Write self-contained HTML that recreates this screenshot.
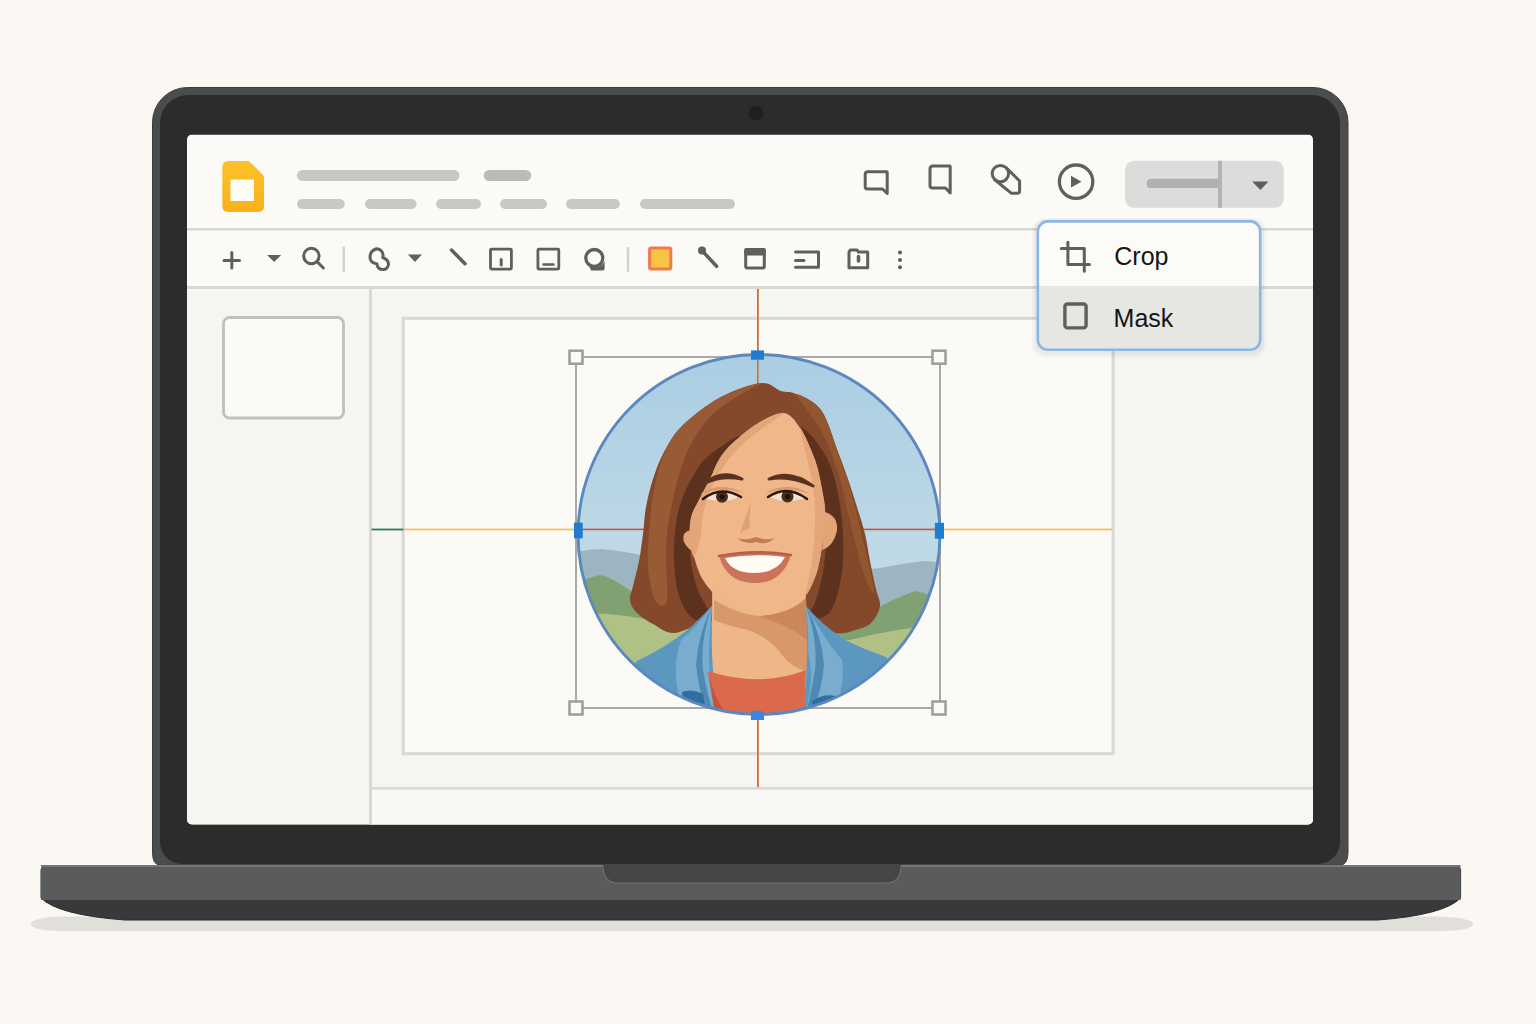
<!DOCTYPE html>
<html>
<head>
<meta charset="utf-8">
<style>
html,body{margin:0;padding:0;background:#FAF8F4;}
body{width:1536px;height:1024px;overflow:hidden;position:relative;font-family:"Liberation Sans",sans-serif;}
svg{position:absolute;left:0;top:0;}
</style>
</head>
<body>
<svg width="1536" height="1024" viewBox="0 0 1536 1024">
<defs>
  <clipPath id="screenClip"><rect x="187" y="134.5" width="1126" height="690" rx="5"/></clipPath>
  <clipPath id="circClip"><ellipse cx="759" cy="534.5" rx="181" ry="180"/></clipPath>
  <linearGradient id="sky" x1="0" y1="0" x2="0" y2="1">
    <stop offset="0" stop-color="#AACDE3"/>
    <stop offset="0.5" stop-color="#BDD8E6"/>
    <stop offset="1" stop-color="#CCDFE6"/>
  </linearGradient>
  <linearGradient id="logoG" x1="0" y1="0" x2="0" y2="1">
    <stop offset="0" stop-color="#FDC22B"/>
    <stop offset="1" stop-color="#F8B01B"/>
  </linearGradient>
</defs>
<!-- background -->
<rect x="0" y="0" width="1536" height="1024" fill="#FBF8F3"/>

<!-- shadow under base -->
<path d="M60 916.5 L1440 916.5 Q1473 918 1473 924 Q1473 930.5 1440 931 L60 931 Q31 930.5 31 924 Q31 918 60 916.5 Z" fill="#E1DFDA"/>

<!-- LAPTOP LID -->
<path d="M152.5 122.5 A35 35 0 0 1 187.5 87.5 L1313 87.5 A35 35 0 0 1 1348 122.5 L1348 852 Q1348 865 1340 865 L160 865 Q152.5 865 152.5 852 Z" fill="#4B4C4C" stroke="#3C3D3D" stroke-width="1"/>
<path d="M160 123 A28 28 0 0 1 188 95 L1312 95 A28 28 0 0 1 1340 123 L1340 842 A22 22 0 0 1 1318 864 L182 864 A22 22 0 0 1 160 842 Z" fill="#2B2D2D"/>
<circle cx="756" cy="113.4" r="7.3" fill="#1E2020"/>

<!-- BASE -->
<path d="M41 870 Q41 867 44 867 L1457.6 867 Q1460.6 867 1460.6 870 L1460.6 898 Q1444 915 1378 920 L125 920 Q58 915 41 898 Z" fill="#38393A" stroke="#2A2B2C" stroke-width="1"/>
<path d="M41 870 Q41 867 44 867 L1457.6 867 Q1460.6 867 1460.6 870 L1460.6 900 L41 900 Z" fill="#5A5B5D"/>
<rect x="41" y="865" width="1419.6" height="2" fill="#767779"/>
<!-- notch -->
<path d="M603 864.5 L901 864.5 L901 868 Q901 883 886 883 L618 883 Q603 883 603 868 Z" fill="#454648"/>
<path d="M603 866 Q603 883 618 883 L886 883 Q901 883 901 866" fill="none" stroke="#6E6F71" stroke-width="1.2"/>

<!-- SCREEN -->
<g clip-path="url(#screenClip)">
  <rect x="187" y="134.5" width="1126" height="690" fill="#FBFAF7"/>
  <!-- sidebar/canvas backgrounds -->
  <rect x="187" y="288" width="1126" height="537" fill="#F6F5F1"/>
  <rect x="371.5" y="789" width="942" height="36" fill="#F8F7F3"/>
  <!-- header divider -->
  <rect x="187" y="228" width="1126" height="2.5" fill="#D9D7D3"/>
  <!-- toolbar divider -->
  <rect x="187" y="286" width="1126" height="3" fill="#D9D7D3"/>
  <!-- sidebar divider -->
  <rect x="369" y="288" width="3" height="537" fill="#DAD8D4"/>
  <!-- canvas bottom line -->
  <rect x="371" y="787" width="942" height="2.5" fill="#DAD8D4"/>
  <!-- thumbnail -->
  <rect x="223.5" y="317.5" width="120" height="100.5" rx="6" fill="#FBFAF7" stroke="#C0C0BF" stroke-width="2.8"/>
  <!-- slide -->
  <rect x="403.2" y="318.3" width="709.9" height="435.4" fill="#FBFAF7" stroke="#DAD8D4" stroke-width="3"/>

  <!-- HEADER -->
  <!-- logo -->
  <path d="M222.3 167 Q222.3 161 228.3 161 L247.5 161 Q249 161 250 162 L263 175 Q264 176 264 177.5 L264 206 Q264 212 258 212 L228.3 212 Q222.3 212 222.3 206 Z" fill="url(#logoG)"/>
  
  <rect x="230.5" y="179.5" width="23.5" height="21.5" fill="#FDFCF6"/>
  <!-- title bars -->
  <g fill="#C8C8C7">
    <rect x="297" y="170" width="162.5" height="11" rx="5.5"/>
    <rect x="483.8" y="170" width="47.4" height="11" rx="5.5" fill="#BABBBA"/>
    <rect x="297" y="199" width="47.7" height="10" rx="5"/>
    <rect x="365" y="199" width="51.6" height="10" rx="5"/>
    <rect x="436" y="199" width="45" height="10" rx="5"/>
    <rect x="500" y="199" width="47" height="10" rx="5"/>
    <rect x="566" y="199" width="53.8" height="10" rx="5"/>
    <rect x="640" y="199" width="95" height="10" rx="5"/>
  </g>
  <!-- right header icons -->
  <g fill="none" stroke="#5E5F5F" stroke-width="3" stroke-linejoin="round" stroke-linecap="round">
    <path d="M868 171.7 L886.7 171.7 Q887.2 171.7 887.2 172.2 L887.2 193.5 L882.5 189 L867.5 189 Q865.2 189 865.2 186.7 L865.2 174.5 Q865.2 171.7 868 171.7 Z"/>
    <path d="M933 166 L949.5 166 Q950.2 166 950.2 166.7 L950.2 193 L945.5 188 L932.5 188 Q930 188 930 185.5 L930 169 Q930 166 933 166 Z"/>
    <circle cx="1000.4" cy="173.6" r="8.2"/>
    <path d="M1006.5 168 L1019.6 181 L1019.6 191 Q1019.6 193.3 1017.3 193.3 L1011.5 193.3 L994.5 179.5"/>
    <circle cx="1076.1" cy="181.7" r="16.7" stroke-width="3.3"/>
  </g>
  <path d="M1071 175.7 L1081.5 181.7 L1071 187.6 Z" fill="#5E5F5F"/>
  <!-- button -->
  <rect x="1125" y="160.8" width="158.8" height="47" rx="9" fill="#DCDCDA"/>
  <rect x="1218" y="160.8" width="4" height="47" fill="#B3B3B3"/>
  <path d="M1151.5 178.7 L1218 178.7 L1218 188.1 L1151.5 188.1 Q1146.6 188.1 1146.6 183.4 Q1146.6 178.7 1151.5 178.7 Z" fill="#AEB0B2"/>
  <path d="M1252.2 181.6 L1268.5 181.6 L1260.35 189.9 Z" fill="#5F5F5F"/>

  <!-- TOOLBAR -->
  <g fill="none" stroke="#5E5F5F" stroke-width="3" stroke-linecap="round" stroke-linejoin="round">
    <!-- plus -->
    <path d="M224 260.4 L239.5 260.4 M231.8 252.6 L231.8 268"/>
    <!-- magnifier -->
    <circle cx="311.4" cy="256" r="7.7"/>
    <path d="M317 261.6 L323.4 268"/>
    <!-- link -->
    <path d="M371.5 252 Q376 246.5 381 250.5 Q384 253.5 382.7 257.5 Q388.5 259.5 388.5 264.5 Q387.5 270 382 269.5 Q377.5 269 377 264 Q370 262.5 370 257.5 Q370 254 371.5 252 Z"/>
    <!-- line -->
    <path d="M451.5 250 L465 263.7" stroke-width="3.5"/>
    <!-- box1 -->
    <rect x="490.5" y="249.2" width="20.9" height="19.9" rx="1" stroke-width="2.8"/>
    <path d="M501.2 259.5 L501.2 265"/>
    <!-- box2 -->
    <rect x="537.9" y="249.2" width="20.9" height="19.9" rx="1" stroke-width="2.8"/>
    <path d="M543.5 264.6 L553.4 264.6" stroke-width="2.5"/>
    <!-- circle bubble -->
    <circle cx="594.3" cy="258" r="8.5" stroke-width="3.3"/>
    <!-- pen -->
    <path d="M702 250.6 L716.6 266.3" stroke-width="3.5"/>
    <!-- window -->
    <rect x="745.7" y="249.5" width="18.6" height="18.4" rx="1.5"/>
    <!-- textbox -->
    <path d="M795.5 252 L818.5 252 L818.5 267.2 L795.5 267.2 M795.5 260.4 L804 260.4"/>
    <!-- folder box -->
    <path d="M849 252 L850.5 250 L857 250 L858.5 252 L867.7 252 L867.7 267.8 L849 267.8 Z"/>
    <path d="M858.5 256.5 L858.5 261" stroke-width="3.5"/>
  </g>
  <path d="M267.1 254.9 L281.1 254.9 L274.1 262.1 Z" fill="#5E5F5F"/>
  <path d="M407.9 254.6 L422 254.6 L414.95 261.9 Z" fill="#5E5F5F"/>
  <circle cx="702" cy="250.6" r="4" fill="#5E5F5F"/>
  <rect x="744.2" y="248" width="21.6" height="7.5" rx="2" fill="#5E5F5F"/>
  <circle cx="900" cy="252.4" r="2" fill="#5E5F5F"/>
  <circle cx="900" cy="260" r="2" fill="#5E5F5F"/>
  <circle cx="900" cy="267.3" r="2" fill="#5E5F5F"/>
  <path d="M589 265.5 L591 270.6 L602.5 270.6 Q604.6 270.6 604.6 268.5 L604.6 261 A10.2 10.2 0 0 1 589 265.5 Z" fill="#5E5F5F"/>
  <!-- separators -->
  <rect x="342.5" y="246.4" width="2.5" height="26" rx="1.2" fill="#D3D2CF"/>
  <rect x="626.8" y="247" width="2.5" height="25" rx="1.2" fill="#D3D2CF"/>
  <!-- CANVAS OBJECTS -->
  <!-- guides -->
  <rect x="757" y="289" width="1.8" height="498" fill="#C8703A"/>
  <rect x="371.5" y="528.6" width="32" height="1.8" fill="#2F7B52"/>
  <rect x="403.5" y="528.6" width="709" height="1.8" fill="#EEC45E"/>
  <!-- selection box -->
  <rect x="576" y="357" width="364" height="351" fill="none" stroke="#A9A9A8" stroke-width="2"/>
  <!-- PORTRAIT -->
  <g clip-path="url(#circClip)" id="portrait">
    <rect x="570" y="350" width="380" height="370" fill="url(#sky)"/>
    <!-- guides behind person -->
    <rect x="570" y="528.6" width="380" height="1.6" fill="#C9553E"/>
    <rect x="757" y="350" width="1.6" height="40" fill="#C8703A"/>
    <!-- far mountains -->
    <path d="M570 554 Q585 549 600 549 Q625 551 650 557 Q700 566 760 570 Q830 574 880 568 Q905 563 925 561 Q940 562 950 565 L950 700 L570 700 Z" fill="#9DB5C1"/>
    <!-- green hills -->
    <path d="M570 588 Q585 578 600 575 Q615 578 640 598 Q700 640 760 640 Q830 640 870 612 Q895 598 915 591 Q930 594 950 604 L950 720 L570 720 Z" fill="#82A173"/>
    <!-- meadow -->
    <path d="M570 614 Q610 611 660 622 Q760 650 850 640 Q900 627 950 624 L950 720 L570 720 Z" fill="#AFC185"/>
    <!-- hair mass -->
    <path d="M675.0 633.0 C665.2 633.7 659.5 627.5 653.0 624.0 C646.5 620.5 639.8 616.0 636.0 612.0 C632.2 608.0 630.5 604.3 630.0 600.0 C629.5 595.7 631.5 592.5 633.0 586.0 C634.5 579.5 637.3 569.7 639.0 561.0 C640.7 552.3 641.8 543.0 643.0 534.0 C644.2 525.0 644.3 516.2 646.0 507.0 C647.7 497.8 650.0 488.2 653.0 479.0 C656.0 469.8 659.0 461.0 664.0 452.0 C669.0 443.0 673.5 434.2 683.0 425.0 C692.5 415.8 708.0 404.0 721.0 397.0 C734.0 390.0 751.0 384.0 761.0 383.0 C771.0 382.0 775.2 389.2 781.0 391.0 C786.8 392.8 789.3 390.8 796.0 394.0 C802.7 397.2 814.0 400.3 821.0 410.0 C828.0 419.7 833.5 440.5 838.0 452.0 C842.5 463.5 844.8 469.8 848.0 479.0 C851.2 488.2 854.2 497.8 857.0 507.0 C859.8 516.2 862.8 525.0 865.0 534.0 C867.2 543.0 868.2 551.8 870.0 561.0 C871.8 570.2 874.3 581.5 876.0 589.0 C877.7 596.5 880.7 600.5 880.0 606.0 C879.3 611.5 875.5 618.2 872.0 622.0 C868.5 625.8 865.2 627.2 859.0 629.0 C852.8 630.8 843.5 634.8 835.0 633.0 C826.5 631.2 820.5 619.3 808.0 618.0 C795.5 616.7 776.0 624.7 760.0 625.0 C744.0 625.3 726.2 618.7 712.0 620.0 C697.8 621.3 684.8 632.3 675.0 633.0 Z" fill="#84492A"/>
    <!-- hair highlights -->
    <path d="M683.0 425.0 C692.2 416.2 708.0 404.0 721.0 397.0 C734.0 390.0 757.0 383.8 761.0 383.0 C765.0 382.2 753.2 386.7 745.0 392.0 C736.8 397.3 721.5 405.3 712.0 415.0 C702.5 424.7 694.3 436.7 688.0 450.0 C681.7 463.3 677.7 479.2 674.0 495.0 C670.3 510.8 667.2 527.5 666.0 545.0 C664.8 562.5 668.8 590.8 667.0 600.0 C665.2 609.2 658.2 605.8 655.0 600.0 C651.8 594.2 648.8 578.3 648.0 565.0 C647.2 551.7 648.7 534.2 650.0 520.0 C651.3 505.8 653.3 491.7 656.0 480.0 C658.7 468.3 661.5 459.2 666.0 450.0 C670.5 440.8 673.8 433.8 683.0 425.0 Z" fill="#985B35"/>
    <path d="M796.0 394.0 C797.8 393.3 814.0 400.3 821.0 410.0 C828.0 419.7 832.8 437.8 838.0 452.0 C843.2 466.2 847.7 479.5 852.0 495.0 C856.3 510.5 860.3 529.2 864.0 545.0 C867.7 560.8 873.7 584.2 874.0 590.0 C874.3 595.8 869.7 590.0 866.0 580.0 C862.3 570.0 856.3 546.7 852.0 530.0 C847.7 513.3 844.3 495.0 840.0 480.0 C835.7 465.0 831.0 451.0 826.0 440.0 C821.0 429.0 815.0 421.7 810.0 414.0 C805.0 406.3 794.2 394.7 796.0 394.0 Z" fill="#93572F"/>
    <!-- hair shadow near face -->
    <path d="M740.0 437.0 C738.8 441.0 722.0 458.7 715.0 470.0 C708.0 481.3 702.2 492.5 698.0 505.0 C693.8 517.5 690.3 531.7 690.0 545.0 C689.7 558.3 692.3 572.5 696.0 585.0 C699.7 597.5 712.7 614.5 712.0 620.0 C711.3 625.5 697.7 622.7 692.0 618.0 C686.3 613.3 681.0 603.3 678.0 592.0 C675.0 580.7 673.7 564.5 674.0 550.0 C674.3 535.5 675.7 519.2 680.0 505.0 C684.3 490.8 693.0 474.8 700.0 465.0 C707.0 455.2 715.3 450.7 722.0 446.0 C728.7 441.3 741.2 433.0 740.0 437.0 Z" fill="#5C321E"/>
    <path d="M800.0 428.0 C800.2 431.7 811.7 447.5 816.0 462.0 C820.3 476.5 824.7 497.8 826.0 515.0 C827.3 532.2 825.7 550.8 824.0 565.0 C822.3 579.2 818.7 591.2 816.0 600.0 C813.3 608.8 805.7 616.0 808.0 618.0 C810.3 620.0 824.3 619.7 830.0 612.0 C835.7 604.3 840.0 587.3 842.0 572.0 C844.0 556.7 843.7 537.0 842.0 520.0 C840.3 503.0 836.5 483.3 832.0 470.0 C827.5 456.7 820.3 447.0 815.0 440.0 C809.7 433.0 799.8 424.3 800.0 428.0 Z" fill="#5C321E"/>
    <!-- neck -->
    <path d="M712 585 L806 585 Q805 640 808 690 L708 690 Q713 640 712 585 Z" fill="#EFB68A"/>
    <path d="M714 600 Q740 615 760 616 Q790 614 806 598 L808 672 Q792 668 782 655 Q770 638 748 630 Q728 626 714 620 Z" fill="#D9986A"/>
    <path d="M760 616 Q790 614 806 598 L807 640 Q795 630 780 624 Q768 620 760 616 Z" fill="#CB875A"/>
    <!-- jacket -->
    <path d="M712 606 Q700 618 690 628 Q665 648 637 661 L590 720 L720 720 Q710 680 712 606 Z" fill="#5C97C0"/>
    <path d="M806 606 Q822 625 845 640 Q865 650 886 657 L930 720 L800 720 Q810 680 806 606 Z" fill="#5C97C0"/>
    <path d="M712 606 Q696 628 681 640 Q671 668 680 700 L690 720 L718 720 Q704 680 712 606 Z" fill="#78ADCF"/>
    <path d="M806 606 Q809 635 808 652 Q816 680 803 720 L830 720 Q846 690 842 660 Q825 640 806 606 Z" fill="#78ADCF"/>
    <path d="M712 606 Q700 640 703 670 Q708 700 716 720 L710 720 Q698 690 696 665 Q698 635 712 606 Z" fill="#4F89B2"/>
    <path d="M806 606 Q818 640 815 670 Q810 700 804 720 L810 720 Q822 690 824 665 Q822 635 806 606 Z" fill="#4F89B2"/>
    <path d="M682 692 Q692 688 703 694 L706 714 L684 707 Z" fill="#2F6E9E"/>
    <path d="M812 701 Q824 693 836 696 L832 713 L812 713 Z" fill="#2F6E9E"/>
    <!-- red shirt -->
    <path d="M708 671 Q760 688 806 670 L804 720 L716 720 Z" fill="#DB6A4C"/>
    <path d="M708 671 Q714 700 730 720 L716 720 Z" fill="#C85338"/>
    <!-- face -->
    <path d="M784.0 413.0 C777.3 412.0 768.2 417.3 760.0 422.0 C751.8 426.7 741.7 435.0 735.0 441.0 C728.3 447.0 724.2 451.7 720.0 458.0 C715.8 464.3 713.5 472.0 710.0 479.0 C706.5 486.0 702.2 493.5 699.0 500.0 C695.8 506.5 692.5 511.3 691.0 518.0 C689.5 524.7 689.5 533.5 690.0 540.0 C690.5 546.5 691.8 550.3 694.0 557.0 C696.2 563.7 698.7 573.0 703.0 580.0 C707.3 587.0 713.8 594.0 720.0 599.0 C726.2 604.0 733.3 607.7 740.0 610.0 C746.7 612.3 753.0 613.0 760.0 613.0 C767.0 613.0 775.3 612.3 782.0 610.0 C788.7 607.7 794.7 604.0 800.0 599.0 C805.3 594.0 810.5 587.7 814.0 580.0 C817.5 572.3 819.2 563.8 821.0 553.0 C822.8 542.2 824.8 525.5 825.0 515.0 C825.2 504.5 823.7 499.2 822.0 490.0 C820.3 480.8 818.7 470.3 815.0 460.0 C811.3 449.7 805.2 435.8 800.0 428.0 C794.8 420.2 790.7 414.0 784.0 413.0 Z" fill="#F0B78B"/>
    <!-- face shading -->
    <path d="M784.0 413.0 C784.0 411.7 768.2 417.3 760.0 422.0 C751.8 426.7 741.7 435.0 735.0 441.0 C728.3 447.0 724.2 451.7 720.0 458.0 C715.8 464.3 713.5 472.0 710.0 479.0 C706.5 486.0 702.2 493.5 699.0 500.0 C695.8 506.5 692.5 511.3 691.0 518.0 C689.5 524.7 689.5 533.5 690.0 540.0 C690.5 546.5 692.3 557.0 694.0 557.0 C695.7 557.0 698.3 547.8 700.0 540.0 C701.7 532.2 701.5 520.0 704.0 510.0 C706.5 500.0 709.8 489.7 715.0 480.0 C720.2 470.3 727.5 460.3 735.0 452.0 C742.5 443.7 751.8 436.5 760.0 430.0 C768.2 423.5 784.0 414.3 784.0 413.0 Z" fill="#E2A678"/>
    <path d="M800.0 428.0 C800.5 424.7 811.3 449.7 815.0 460.0 C818.7 470.3 820.3 480.8 822.0 490.0 C823.7 499.2 825.2 504.5 825.0 515.0 C824.8 525.5 822.8 542.2 821.0 553.0 C819.2 563.8 816.5 573.2 814.0 580.0 C811.5 586.8 806.3 597.3 806.0 594.0 C805.7 590.7 810.5 572.3 812.0 560.0 C813.5 547.7 815.0 533.3 815.0 520.0 C815.0 506.7 814.5 495.3 812.0 480.0 C809.5 464.7 799.5 431.3 800.0 428.0 Z" fill="#E4A77A"/>
    <!-- ears -->
    <path d="M825 512 Q838 516 837 530 Q834 546 822 550 Z" fill="#E3A477"/>
    <path d="M691 530 Q681 532 684 542 Q688 550 695 552 Z" fill="#E3A477"/>
    <!-- eyebrows -->
    <path d="M705 483 Q722 469 742 479 Q722 475 705 483 Z" fill="#5A321F" stroke="#5A321F" stroke-width="3" stroke-linejoin="round"/>
    <path d="M769 479 Q790 469 813 486 Q790 475 769 479 Z" fill="#5A321F" stroke="#5A321F" stroke-width="3" stroke-linejoin="round"/>
    <!-- eyes -->
    <path d="M700 494 Q720 480 744 493 Q722 486 700 494 Z" fill="#D99A72"/>
    <path d="M705 498 Q721 488 739 497 Q722 505 705 498 Z" fill="#F3E2D6"/>
    <circle cx="722" cy="496.8" r="6" fill="#4A2B1C"/>
    <circle cx="722" cy="496.8" r="2.6" fill="#1E120C"/>
    <path d="M703 499 Q721 485 741 497" fill="none" stroke="#2A1810" stroke-width="2.6" stroke-linecap="round"/>
    <path d="M765 493 Q788 480 810 494 Q788 486 765 493 Z" fill="#D99A72"/>
    <path d="M770 497 Q787 488 805 498 Q787 505 770 497 Z" fill="#F3E2D6"/>
    <circle cx="787.5" cy="496.5" r="6" fill="#4A2B1C"/>
    <circle cx="787.5" cy="496.5" r="2.6" fill="#1E120C"/>
    <path d="M768 497 Q787 484 807 499" fill="none" stroke="#2A1810" stroke-width="2.6" stroke-linecap="round"/>
    <!-- nose -->
    <path d="M752 500 Q744 520 740 534 Q744 530 750 528 Q748 515 752 500 Z" fill="#DFA073"/>
    <path d="M737 538 Q745 545 756 542 Q766 546 775 538 Q766 541 756 537 Q746 541 737 538 Z" fill="#C27C52"/>
    <!-- mouth -->
    <path d="M719 556 Q755 549 791 555 Q782 584 754 583 Q727 583 719 556 Z" fill="#CC735B"/>
    <path d="M725 558 Q755 553 785 557 Q777 573 754 573 Q732 573 725 558 Z" fill="#FFFCF6"/>
    <path d="M719 556 Q755 549 791 555" fill="none" stroke="#B85E49" stroke-width="2.5" stroke-linecap="round"/>
  </g>
  <ellipse cx="759" cy="534.5" rx="181" ry="180" fill="none" stroke="#5A88BF" stroke-width="2.9"/>
  <!-- handles -->
  <g fill="#FBFAF7" stroke="#9C9C9B" stroke-width="2.5">
    <rect x="569.5" y="350.7" width="13" height="13"/>
    <rect x="932.5" y="350.7" width="13" height="13"/>
    <rect x="569.5" y="701.5" width="13" height="13"/>
    <rect x="932.5" y="701.5" width="13" height="13"/>
  </g>
  <rect x="751" y="350.4" width="13" height="9.3" fill="#1C7DD1"/>
  <rect x="574" y="522.7" width="8.7" height="15.6" fill="#1C7DD1"/>
  <rect x="934.9" y="522.8" width="9.1" height="15.9" fill="#1C7DD1"/>
  <path d="M751 712 Q757.5 709.5 764 712 L764 720 L751 720 Z" fill="#3A86E0"/>
  <!-- DROPDOWN MENU -->
  <rect x="1032" y="218" width="234" height="140" rx="14" fill="#000" opacity="0.03"/>
  <rect x="1034" y="219" width="230" height="136" rx="12" fill="#000" opacity="0.03"/>
  <clipPath id="menuClip"><rect x="1038" y="221.5" width="222" height="128" rx="9"/></clipPath>
  <g clip-path="url(#menuClip)">
    <rect x="1038" y="221.5" width="222" height="128" fill="#FCFBF8"/>
    <rect x="1038" y="286" width="222" height="64" fill="#E6E6E3"/>
  </g>
  <rect x="1037.8" y="221.4" width="222.4" height="128.4" rx="10" fill="none" stroke="#8DB5E3" stroke-width="2.6"/>
  <g fill="none" stroke="#5E5F5F" stroke-width="3" stroke-linecap="round" stroke-linejoin="round">
    <path d="M1067.9 242.3 L1067.9 264.6 L1089.5 264.6 M1061.3 248.6 L1084.3 248.6 L1084.3 271.3"/>
    <rect x="1064.9" y="304" width="21.2" height="23.9" rx="2.5" stroke-width="3.4"/>
  </g>
  <text x="1114.3" y="264.6" font-family="Liberation Sans" font-size="25" fill="#151515">Crop</text>
  <text x="1113.6" y="327" font-family="Liberation Sans" font-size="25" fill="#151515">Mask</text>
  <!-- orange square -->
  <rect x="649.6" y="248" width="21.2" height="20.9" rx="1.5" fill="#F8C443" stroke="#EF7B4C" stroke-width="3"/>
</g>
</svg>
</body>
</html>
